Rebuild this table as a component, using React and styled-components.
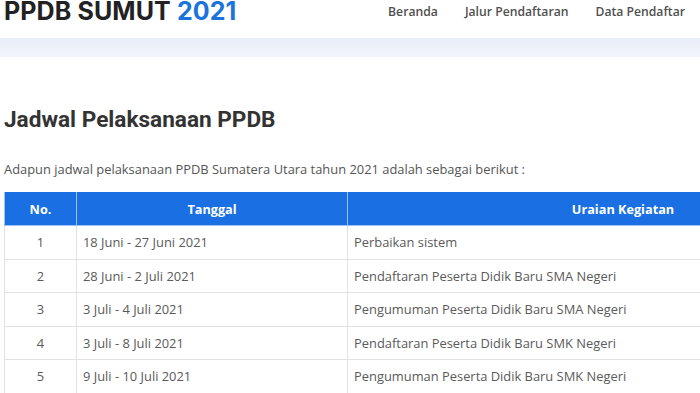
import React from 'react';
import styled, { createGlobalStyle } from 'styled-components';

const GlobalStyle = createGlobalStyle`
  html, body {
    margin: 0;
    padding: 0;
    background: #fff;
    overflow: hidden;
  }
  body {
    font-family: "Open Sans", "Liberation Sans", sans-serif;
  }
`;

const Page = styled.div`
  width: 700px;
  height: 393px;
  overflow: hidden;
`;

const Header = styled.header`
  height: 38px;
  display: flex;
  align-items: flex-start;
  justify-content: space-between;
  padding: 0 15px 0 4px;
  background: #fff;
`;

const Logo = styled.h1`
  margin: -4px 0 0;
  font-family: Inter, "Liberation Sans", sans-serif;
  font-size: 25px;
  line-height: 30px;
  font-weight: 700;
  letter-spacing: 0.1px;
  color: #222;
  white-space: nowrap;

  span {
    color: #1b74dc;
  }
`;

const Nav = styled.nav`
  display: flex;
  gap: 27px;
  padding-top: 3px;
`;

const NavItem = styled.a`
  font-size: 12.2px;
  font-weight: 600;
  color: #505050;
  line-height: 17px;
  text-decoration: none;
`;

const ShadowBand = styled.div`
  height: 19px;
  background: linear-gradient(#e8edf8, #f3f5fb);
`;

const Main = styled.main`
  padding: 0 4px;
`;

const Title = styled.h2`
  margin: 48px 0 0;
  font-family: Roboto, "Liberation Sans", sans-serif;
  font-size: 22.6px;
  font-weight: 700;
  line-height: 30px;
  color: #333;
`;

const Intro = styled.p`
  margin: 25px 0 14px;
  font-size: 12.9px;
  line-height: 18px;
  color: #555;
  white-space: nowrap;
`;

const Table = styled.table`
  width: 895px;
  border-collapse: collapse;
  font-size: 12.9px;
  color: #5a5a5a;
`;

const Th = styled.th`
  height: 33px;
  padding: 0 6px;
  background: #1a6fe3;
  color: #fff;
  font-weight: 700;
  font-size: 12.7px;
  text-align: center;
  border: 1px solid #9cc1f3;
  border-top: none;
`;

const Td = styled.td`
  height: 32.5px;
  padding: 0 6px;
  border: 1px solid #e2e2e2;
  white-space: nowrap;
  text-align: ${(p) => (p.$center ? 'center' : 'left')};
`;

const rows = [
  ['1', '18 Juni - 27 Juni 2021', 'Perbaikan sistem'],
  ['2', '28 Juni - 2 Juli 2021', 'Pendaftaran Peserta Didik Baru SMA Negeri'],
  ['3', '3 Juli - 4 Juli 2021', 'Pengumuman Peserta Didik Baru SMA Negeri'],
  ['4', '3 Juli - 8 Juli 2021', 'Pendaftaran Peserta Didik Baru SMK Negeri'],
  ['5', '9 Juli - 10 Juli 2021', 'Pengumuman Peserta Didik Baru SMK Negeri'],
  ['6', '12 Juli - 13 Juli 2021', 'Daftar ulang'],
];

const App = () => {
  return (
    <Page>
      <GlobalStyle />
      <Header>
        <Logo>
          PPDB SUMUT <span>2021</span>
        </Logo>
        <Nav>
          <NavItem>Beranda</NavItem>
          <NavItem>Jalur Pendaftaran</NavItem>
          <NavItem>Data Pendaftar</NavItem>
        </Nav>
      </Header>
      <ShadowBand />
      <Main>
        <Title>Jadwal Pelaksanaan PPDB</Title>
        <Intro>
          Adapun jadwal pelaksanaan PPDB Sumatera Utara tahun 2021 adalah sebagai berikut :
        </Intro>
        <Table>
          <colgroup>
            <col style={{ width: 72 }} />
            <col style={{ width: 271 }} />
            <col />
          </colgroup>
          <thead>
            <tr>
              <Th>No.</Th>
              <Th>Tanggal</Th>
              <Th>Uraian Kegiatan</Th>
            </tr>
          </thead>
          <tbody>
            {rows.map((r) => (
              <tr key={r[0]}>
                <Td $center>{r[0]}</Td>
                <Td>{r[1]}</Td>
                <Td>{r[2]}</Td>
              </tr>
            ))}
          </tbody>
        </Table>
      </Main>
    </Page>
  );
};

export default App;
